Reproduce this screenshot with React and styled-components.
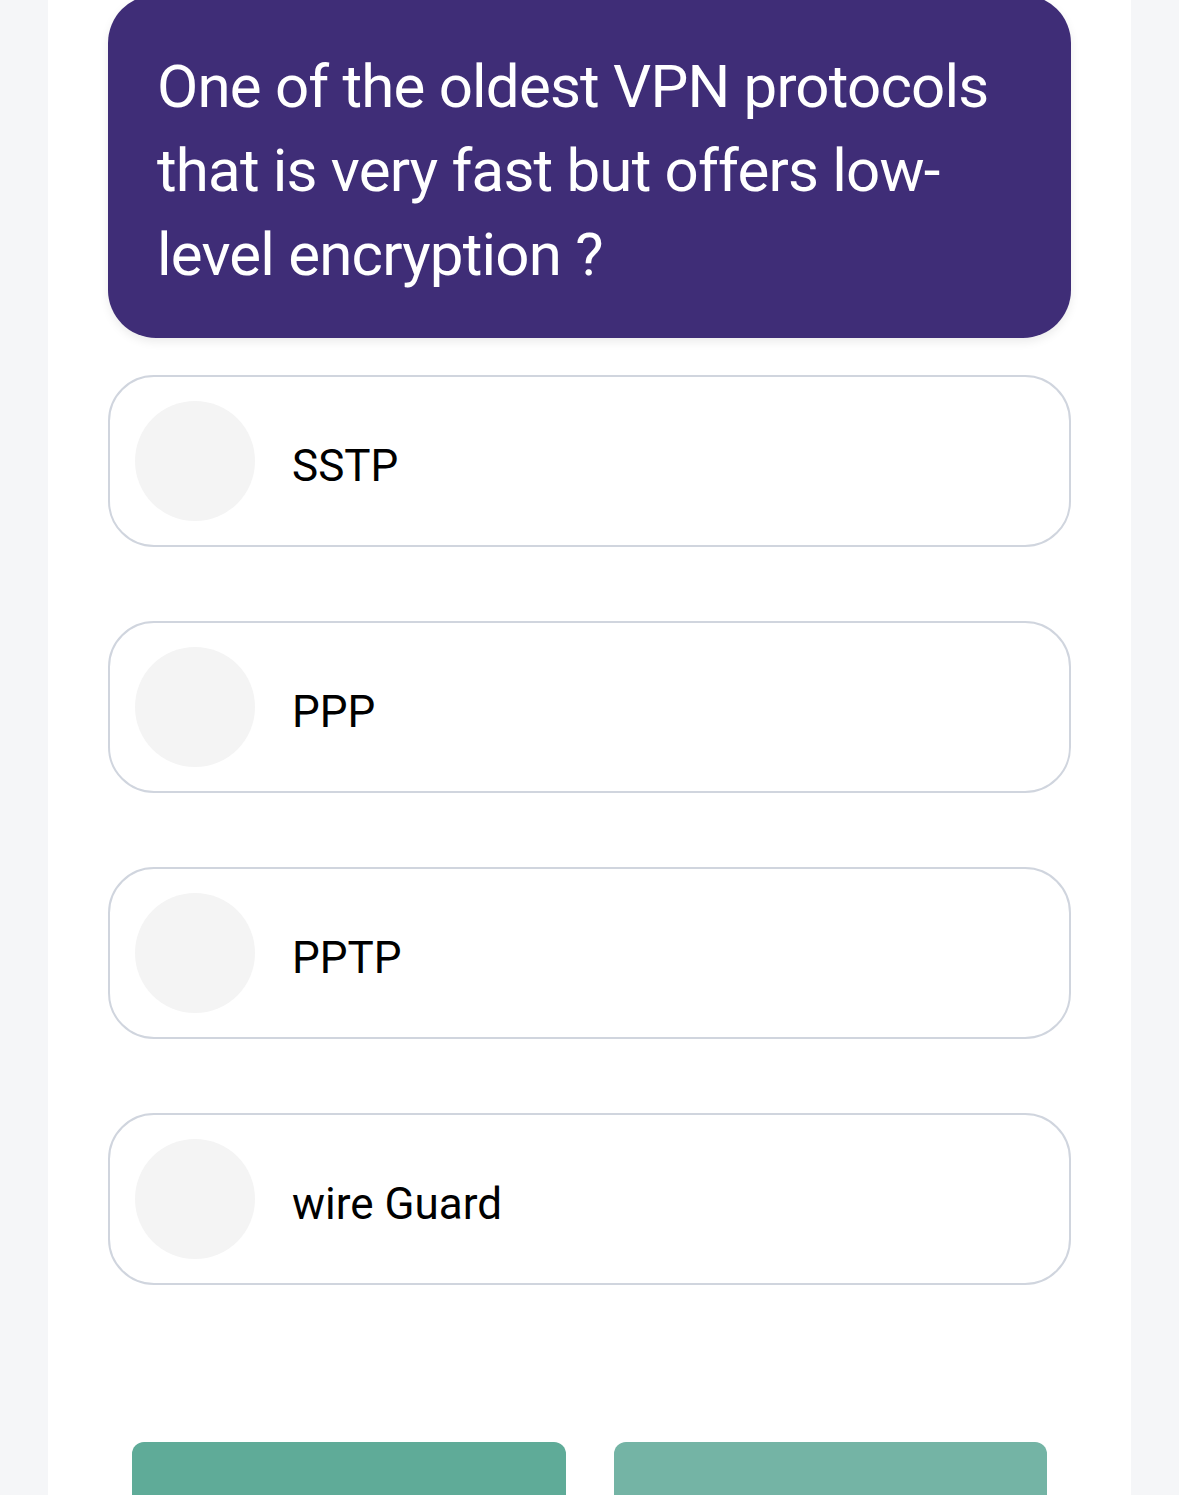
import React from "react"
import styled, { createGlobalStyle } from "styled-components"

const GlobalStyle = createGlobalStyle`
  body {
    margin: 0;
    background: #f5f6f8;
    font-family: Roboto, "Noto Sans", sans-serif;
  }
`

const Column = styled.main`
  width: 1083px;
  min-height: 1495px;
  margin: 0 auto;
  background: #ffffff;
  overflow: hidden;
`

const QuestionCard = styled.section`
  margin: -5px 60px 0;
  padding: 50px 49px 41px;
  background: #3f2d77;
  border-radius: 48px;
  box-shadow: 0 4px 10px rgba(0, 0, 0, 0.08);
  color: #ffffff;
  font-size: 60px;
  line-height: 84px;
  letter-spacing: -0.8px;
`

const OptionList = styled.div`
  display: flex;
  flex-direction: column;
  gap: 74px;
  margin: 37px 60px 0;
`

const Option = styled.button`
  display: flex;
  align-items: center;
  gap: 37px;
  height: 172px;
  padding: 0 25px;
  box-sizing: border-box;
  border: 2px solid #d0d5de;
  border-radius: 46px;
  background: #ffffff;
  font-family: inherit;
  font-size: 44px;
  color: #000000;
  text-align: left;
  cursor: pointer;
`

const Marker = styled.span`
  flex: none;
  width: 120px;
  height: 120px;
  border-radius: 50%;
  background: #f4f4f4;
`

const Label = styled.span`
  padding-top: 9px;
`

const ButtonRow = styled.div`
  display: grid;
  grid-template-columns: 1fr 1fr;
  gap: 48px;
  margin: 157px 84px 0;
`

const NavButton = styled.button`
  height: 120px;
  border: none;
  border-radius: 12px;
  background: ${({ $light }) => ($light ? "#74b4a5" : "#5fab98")};
`

const options = ["SSTP", "PPP", "PPTP", "wire Guard"]

const App = () => (
  <>
    <GlobalStyle />
    <Column>
      <QuestionCard>
        One of the oldest VPN protocols that is very fast but offers low-level encryption ?
      </QuestionCard>
      <OptionList>
        {options.map((label) => (
          <Option key={label}>
            <Marker />
            <Label>{label}</Label>
          </Option>
        ))}
      </OptionList>
      <ButtonRow>
        <NavButton />
        <NavButton $light />
      </ButtonRow>
    </Column>
  </>
)

export default App
